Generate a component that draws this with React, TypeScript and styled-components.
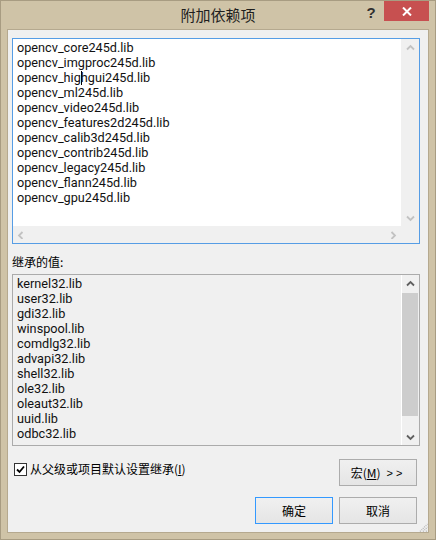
import React from 'react';
import styled, {createGlobalStyle} from 'styled-components';

const GlobalStyle = createGlobalStyle`
  html, body {
    margin: 0;
    padding: 0;
    background: #cfc3a7;
    overflow: hidden;
  }
`;

const uiFont = `Roboto, "Noto Sans", "Noto Sans CJK SC", sans-serif`;
const cjkFont = `"Noto Sans CJK SC", "Noto Sans", sans-serif`;

const projectLibs = [
    'opencv_core245d.lib',
    'opencv_imgproc245d.lib',
    'opencv_highgui245d.lib',
    'opencv_ml245d.lib',
    'opencv_video245d.lib',
    'opencv_features2d245d.lib',
    'opencv_calib3d245d.lib',
    'opencv_contrib245d.lib',
    'opencv_legacy245d.lib',
    'opencv_flann245d.lib',
    'opencv_gpu245d.lib',
];

const inheritedLibs = [
    'kernel32.lib',
    'user32.lib',
    'gdi32.lib',
    'winspool.lib',
    'comdlg32.lib',
    'advapi32.lib',
    'shell32.lib',
    'ole32.lib',
    'oleaut32.lib',
    'uuid.lib',
    'odbc32.lib',
];

const Window = styled.div`
  width: 436px;
  height: 540px;
  box-sizing: border-box;
  border: 1px solid #a89c82;
  background: #cfc3a7;
  padding: 0 6px 6px;
  display: flex;
  flex-direction: column;
`;

const TitleBar = styled.div`
  height: 28px;
  margin: 0 -6px;
  display: grid;
  grid-template-columns: 1fr auto 1fr;
  align-items: start;
`;

const Title = styled.div`
  grid-column: 2;
  font-family: ${cjkFont};
  font-size: 15px;
  line-height: 28px;
  color: #1e1e1e;
`;

const Controls = styled.div`
  grid-column: 3;
  justify-self: end;
  display: flex;
  margin-right: 6px;
`;

const HelpButton = styled.div`
  width: 26px;
  height: 20px;
  display: flex;
  align-items: center;
  justify-content: center;
  font-family: "Liberation Sans", sans-serif;
  font-weight: bold;
  font-size: 15px;
  color: #303030;
  padding-top: 2px;
  box-sizing: border-box;
`;

const CloseButton = styled.div`
  width: 45px;
  height: 20px;
  background: #c75050;
  display: flex;
  align-items: center;
  justify-content: center;
`;

const Client = styled.div`
  flex: 1;
  position: relative;
  border: 1px solid #b5a98f;
  background: #f0f0f0;
  padding: 8px 8px 0 4px;
  display: flex;
  flex-direction: column;
  font-family: ${uiFont};
  font-size: 12.7px;
  color: #000;
`;

const ListBox = styled.div<{ $focused?: boolean; $height: number; $hasHBar?: boolean }>`
  height: ${p => p.$height}px;
  box-sizing: border-box;
  border: 1px solid ${p => (p.$focused ? '#569de5' : '#ababab')};
  background: ${p => (p.$focused ? '#fff' : '#f0f0f0')};
  display: grid;
  grid-template-columns: 1fr 17px;
  grid-template-rows: ${p => (p.$hasHBar ? '1fr 17px' : '1fr')};
  overflow: hidden;
`;

const Lines = styled.div`
  padding: 1px 4px;
  overflow: hidden;
`;

const Line = styled.div`
  line-height: 15px;
  height: 15px;
  white-space: nowrap;
  color: #111;
`;

const Caret = styled.span`
  display: inline-block;
  width: 0;
  height: 14px;
  border-left: 1px solid #000;
  margin-right: -1px;
  vertical-align: -3px;
`;

const VScroll = styled.div<{ $light?: boolean }>`
  display: flex;
  flex-direction: column;
  background: #f0f0f0;
  border-left: 1px solid ${p => (p.$light ? '#fff' : '#f0f0f0')};
  margin-left: -1px;
`;

const HScroll = styled.div`
  grid-column: 1 / span 2;
  display: flex;
  background: #f0f0f0;
`;

const ArrowBox = styled.div<{ $w?: number; $h?: number }>`
  width: ${p => p.$w ?? 17}px;
  height: ${p => p.$h ?? 17}px;
  flex: none;
  display: flex;
  align-items: center;
  justify-content: center;
`;

const Track = styled.div`
  flex: 1;
  display: flex;
  flex-direction: column;
  padding: 0 1px 0 0;
`;

const Thumb = styled.div<{ $size: number }>`
  height: ${p => p.$size}px;
  background: #cdcdcd;
  margin-top: 1px;
`;

const Spacer = styled.div`
  flex: 1;
`;

const SectionLabel = styled.div`
  font-family: ${cjkFont};
  font-size: 12px;
  margin-top: 10px;
  margin-bottom: 4px;
  line-height: 16px;
  height: 16px;
`;

const Footer = styled.div`
  margin-top: 13px;
  display: flex;
  flex-direction: column;
  gap: 11px;
  padding-right: 3px;
`;

const Row = styled.div<{ $end?: boolean }>`
  display: flex;
  align-items: flex-start;
  justify-content: ${p => (p.$end ? 'flex-end' : 'space-between')};
  gap: 6px;
`;

const CheckLabel = styled.label`
  display: flex;
  align-items: center;
  gap: 3px;
  margin-top: 3px;
  margin-left: 2px;
  font-family: ${cjkFont};
  font-size: 12px;
  line-height: 14px;
`;

const Box = styled.span`
  width: 13px;
  height: 13px;
  box-sizing: border-box;
  border: 1px solid #333;
  background: #fff;
  display: flex;
  align-items: center;
  justify-content: center;
`;

const Button = styled.div<{ $default?: boolean }>`
  width: 78px;
  height: 27px;
  box-sizing: border-box;
  border: 1px solid ${p => (p.$default ? '#3399ff' : '#acacac')};
  background: linear-gradient(#f0f0f0, #e5e5e5);
  display: flex;
  align-items: center;
  justify-content: center;
  font-family: ${cjkFont};
  font-size: 12px;
  color: #000;
`;

const Key = styled.span`
  text-decoration: underline;
`;

const Chevrons = styled.span`
  margin-left: 6px;
  letter-spacing: 3px;
  font-size: 11px;
  font-family: "Liberation Sans", sans-serif;
`;

const Grip = styled.svg`
  position: absolute;
  right: 0;
  bottom: 0;
`;

type Dir = 'up' | 'down' | 'left' | 'right';

const Arrow: React.FC<{ dir: Dir; color: string }> = ({dir, color}) => {
    const pts: Record<Dir, string> = {
        up: '1,5.5 4.5,2 8,5.5',
        down: '1,2.5 4.5,6 8,2.5',
        left: '5.5,1 2,4.5 5.5,8',
        right: '2.5,1 6,4.5 2.5,8',
    };
    return (
        <svg width="9" height="8" viewBox="0 0 9 8">
            <polyline points={pts[dir]} fill="none" stroke={color} strokeWidth="1.8"/>
        </svg>
    );
};

export default function App() {
    const dim = '#c2c2c2';
    const dark = '#606060';
    return (
        <>
            <GlobalStyle/>
            <Window>
                <TitleBar>
                    <Title>附加依赖项</Title>
                    <Controls>
                        <HelpButton>?</HelpButton>
                        <CloseButton>
                            <svg width="10" height="9" viewBox="0 0 10 9">
                                <path d="M1 0.5 L9 8.5 M9 0.5 L1 8.5" stroke="#fff" strokeWidth="2"/>
                            </svg>
                        </CloseButton>
                    </Controls>
                </TitleBar>
                <Client>
                    <ListBox $focused $height={206} $hasHBar>
                        <Lines>
                            {projectLibs.map(lib =>
                                lib === 'opencv_highgui245d.lib' ? (
                                    <Line key={lib}>opencv_hig<Caret/>hgui245d.lib</Line>
                                ) : (
                                    <Line key={lib}>{lib}</Line>
                                )
                            )}
                        </Lines>
                        <VScroll>
                            <ArrowBox><Arrow dir="up" color={dim}/></ArrowBox>
                            <Spacer/>
                            <ArrowBox><Arrow dir="down" color={dim}/></ArrowBox>
                        </VScroll>
                        <HScroll>
                            <ArrowBox><Arrow dir="left" color={dim}/></ArrowBox>
                            <Spacer/>
                            <ArrowBox><Arrow dir="right" color={dim}/></ArrowBox>
                            <ArrowBox/>
                        </HScroll>
                    </ListBox>

                    <SectionLabel>继承的值:</SectionLabel>

                    <ListBox $height={172}>
                        <Lines>
                            {inheritedLibs.map(lib => <Line key={lib}>{lib}</Line>)}
                        </Lines>
                        <VScroll $light>
                            <ArrowBox><Arrow dir="up" color={dark}/></ArrowBox>
                            <Track>
                                <Thumb $size={123}/>
                            </Track>
                            <ArrowBox><Arrow dir="down" color={dark}/></ArrowBox>
                        </VScroll>
                    </ListBox>

                    <Footer>
                        <Row>
                            <CheckLabel>
                                <Box>
                                    <svg width="9" height="9" viewBox="0 0 9 9">
                                        <polyline points="1,4.5 3.5,7 8,1.5" fill="none" stroke="#000" strokeWidth="1.8"/>
                                    </svg>
                                </Box>
                                <span>从父级或项目默认设置继承(<Key>I</Key>)</span>
                            </CheckLabel>
                            <Button>宏(<Key>M</Key>)<Chevrons>&gt;&gt;</Chevrons></Button>
                        </Row>
                        <Row $end>
                            <Button $default>确定</Button>
                            <Button>取消</Button>
                        </Row>
                    </Footer>

                    <Grip width="11" height="11" viewBox="0 0 11 11">
                        {[2, 5, 8].map(o => (
                            <path key={o} d={`M${11 - o} 10.5 L10.5 ${11 - o}`} stroke="#b8b8b8" strokeWidth="1.4" strokeDasharray="1 1"/>
                        ))}
                    </Grip>
                </Client>
            </Window>
        </>
    );
}
